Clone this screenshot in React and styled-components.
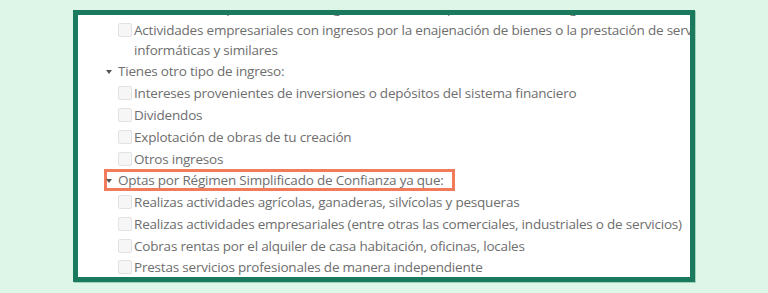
import React from "react";
import styled, { createGlobalStyle } from "styled-components";

const Global = createGlobalStyle`
  html, body { margin: 0; padding: 0; background: #def6e8; }
  body { font-family: "Open Sans", "Liberation Sans", sans-serif; }
`;

const Page = styled.div`
  width: 768px;
  height: 293px;
  padding: 10px 0 0 73px;
  box-sizing: border-box;
`;

const Frame = styled.div`
  width: 622px;
  height: 272px;
  box-sizing: border-box;
  border: 5px solid #1b7a5e;
  background: #ffffff;
  overflow: hidden;
  box-shadow: 1px 1px 0 #9fd3bb;
`;

const List = styled.ul`
  list-style: none;
  margin: -18px 0 0 0;
  padding: 0 0 0 29px;
  font-size: 13.5px;
  letter-spacing: -0.2px;
  line-height: 20px;
  color: #6e6e6e;
`;

const Item = styled.li`
  display: flex;
  align-items: flex-start;
  padding: 0.9px 0 0.9px 11px;
  white-space: nowrap;
`;

const Box = styled.span`
  flex: none;
  width: 12px;
  height: 12px;
  margin: 3px 2px 0 0;
  border: 1px solid #e2e2e2;
  border-radius: 2px;
  background: #f6f6f6;
`;

const Head = styled.li`
  display: flex;
  padding: 0.9px 0;
  white-space: nowrap;
`;

const HeadInner = styled.span`
  display: inline-flex;
  align-items: center;
  margin: ${(p) => (p.$mark ? "-1px 0 -1px -3px" : "0")};
  padding: ${(p) => (p.$mark ? "0 8px 0 0" : "0")};
  border: ${(p) => (p.$mark ? "3px solid #f27b5b" : "none")};
  line-height: ${(p) => (p.$mark ? "16px" : "20px")};
`;

const Caret = styled.span`
  width: 0;
  height: 0;
  margin: 1px 6px 0 -1px;
  border-left: 3px solid transparent;
  border-right: 3px solid transparent;
  border-top: 4px solid #555;
`;

const Check = ({ children }) => (
  <Item>
    <Box />
    <span>{children}</span>
  </Item>
);

const Header = ({ children, mark }) => (
  <Head>
    <HeadInner $mark={mark}>
      <Caret />
      {children}
    </HeadInner>
  </Head>
);

export default function App() {
  return (
    <>
      <Global />
      <Page>
        <Frame>
          <List>
            <Check>Actividades empresariales con ingresos a través de plataformas tecnológicas</Check>
            <Check>
              Actividades empresariales con ingresos por la enajenación de bienes o la prestación de servicios
              <br />
              informáticas y similares
            </Check>
            <Header>Tienes otro tipo de ingreso:</Header>
            <Check>Intereses provenientes de inversiones o depósitos del sistema financiero</Check>
            <Check>Dividendos</Check>
            <Check>Explotación de obras de tu creación</Check>
            <Check>Otros ingresos</Check>
            <Header mark>Optas por Régimen Simplificado de Confianza ya que:</Header>
            <Check>Realizas actividades agrícolas, ganaderas, silvícolas y pesqueras</Check>
            <Check>Realizas actividades empresariales (entre otras las comerciales, industriales o de servicios)</Check>
            <Check>Cobras rentas por el alquiler de casa habitación, oficinas, locales</Check>
            <Check>Prestas servicios profesionales de manera independiente</Check>
          </List>
        </Frame>
      </Page>
    </>
  );
}
